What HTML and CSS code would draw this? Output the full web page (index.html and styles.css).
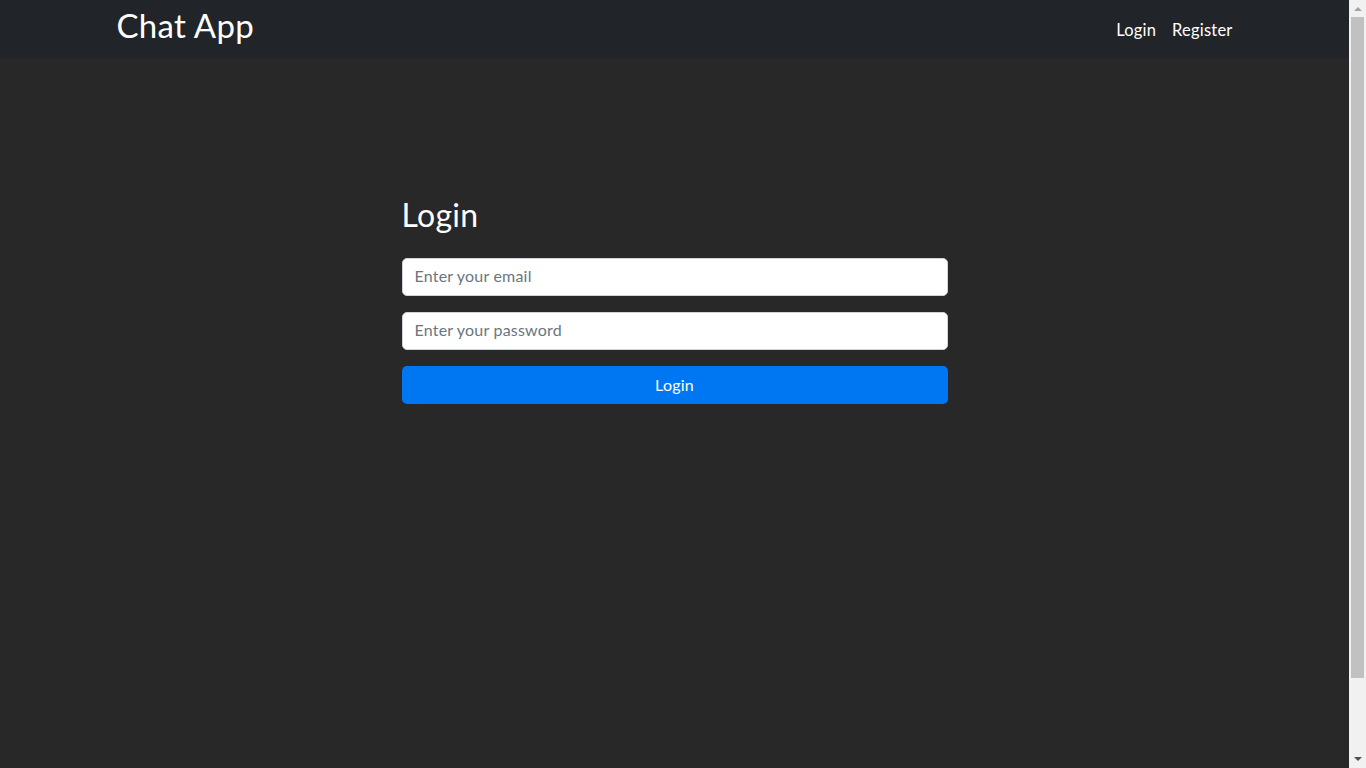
FILE: index.html
```html
<!DOCTYPE html>
<html lang="en">
<head>
<meta charset="utf-8">
<title>Chat App</title>
<link rel="stylesheet" href="styles.css">
</head>
<body>
<div class="page">
  <nav class="navbar">
    <div class="nav-inner">
      <a class="brand" href="#">Chat App</a>
      <div class="nav-links">
        <a class="nav-link" href="#">Login</a>
        <a class="nav-link" href="#">Register</a>
      </div>
    </div>
  </nav>
  <main class="main">
    <form class="login-form">
      <h2 class="title">Login</h2>
      <input class="field" type="email" placeholder="Enter your email">
      <input class="field" type="password" placeholder="Enter your password">
      <button class="btn" type="button">Login</button>
    </form>
  </main>
</div>
<div class="scrollbar" aria-hidden="true">
  <span class="sb-arrow sb-up"></span>
  <span class="sb-thumb"></span>
  <span class="sb-arrow sb-down"></span>
</div>
</body>
</html>
```
FILE: styles.css
```css
html, body {
  margin: 0;
  padding: 0;
  height: 100%;
}
body {
  display: flex;
  background: #282828;
  font-family: "Lato", "Noto Sans", sans-serif;
  color: #fff;
  overflow: hidden;
}
.page {
  flex: 1;
  display: flex;
  flex-direction: column;
  min-width: 0;
}
.navbar {
  background: #212529;
  height: 59px;
  flex-shrink: 0;
}
.nav-inner {
  max-width: 1140px;
  margin: 0 auto;
  height: 100%;
  display: flex;
  align-items: center;
  justify-content: space-between;
  padding: 0 4px 0 12px;
  box-sizing: border-box;
}
.brand {
  color: #fff;
  text-decoration: none;
  font-size: 33px;
  line-height: 1;
  padding-bottom: 9px;
  letter-spacing: 0.3px;
}
.nav-links {
  display: flex;
  padding-top: 1px;
}
.nav-link {
  color: #fff;
  text-decoration: none;
  font-size: 16.5px;
  padding: 8px;
  letter-spacing: 0.2px;
}
.main {
  flex: 1;
  display: flex;
  justify-content: center;
}
.login-form {
  width: 546px;
  margin-top: 137px;
  display: flex;
  flex-direction: column;
  gap: 16px;
  align-self: flex-start;
}
.title {
  font-size: 32px;
  font-weight: 400;
  line-height: 38px;
  margin: 0 0 8px;
  letter-spacing: 0.3px;
}
.field {
  height: 38px;
  box-sizing: border-box;
  border: 1px solid #ced4da;
  border-radius: 5px;
  padding: 0 12px 3px;
  font-family: inherit;
  font-size: 16px;
  letter-spacing: 0.2px;
  color: #495057;
  background: #fff;
}
.field::placeholder {
  color: #6c757d;
}
.btn {
  height: 38px;
  border: none;
  border-radius: 5px;
  padding: 0 0 2px;
  background: #0077f2;
  color: #fff;
  font-family: inherit;
  font-size: 16px;
  letter-spacing: 0.2px;
}
.scrollbar {
  width: 17px;
  flex-shrink: 0;
  background: #f1f1f1;
  display: flex;
  flex-direction: column;
  align-items: center;
}
.sb-arrow {
  width: 0;
  height: 0;
  border-left: 4px solid transparent;
  border-right: 4px solid transparent;
}
.sb-up {
  margin-top: 7px;
  border-bottom: 4px solid #a3a3a3;
}
.sb-thumb {
  width: 13px;
  margin-top: 6px;
  height: 661px;
  background: #c1c1c1;
}
.sb-down {
  margin-top: auto;
  margin-bottom: 7px;
  border-top: 4px solid #505050;
}
```
